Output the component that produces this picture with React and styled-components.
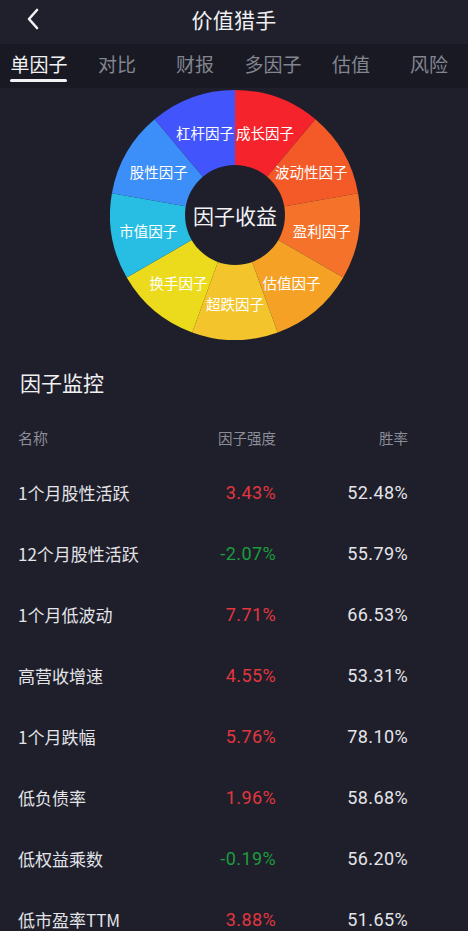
import React from "react";
import styled, { createGlobalStyle } from "styled-components";

const GlobalStyle = createGlobalStyle`
  html, body {
    margin: 0;
    padding: 0;
    background: #1e1f2b;
  }
  body {
    font-family: "Noto Sans CJK SC", "Noto Sans", sans-serif;
    color: #e8e8ec;
  }
`;

const Page = styled.div`
  width: 468px;
  min-height: 931px;
  background: #1e1f2b;
  overflow: hidden;
`;

const NavBar = styled.header`
  height: 44px;
  box-sizing: border-box;
  padding-bottom: 6px;
  display: grid;
  grid-template-columns: 60px 1fr 60px;
  align-items: center;
  background: #1f202c;
`;

const BackButton = styled.div`
  display: flex;
  align-items: center;
  padding-left: 26px;
`;

const Title = styled.h1`
  margin: 0;
  text-align: center;
  font-size: 21px;
  line-height: 28px;
  font-weight: 400;
  color: #f0f0f2;
  letter-spacing: 0.3px;
`;

const TabBar = styled.nav`
  height: 44px;
  display: grid;
  grid-template-columns: repeat(6, 1fr);
  background: #181923;
`;

const Tab = styled.div`
  position: relative;
  display: flex;
  align-items: center;
  justify-content: center;
  padding-bottom: 6px;
  font-size: 19px;
  color: ${(p) => (p.$active ? "#f2f2f4" : "#83858f")};

  &::after {
    content: "";
    display: ${(p) => (p.$active ? "block" : "none")};
    position: absolute;
    left: 10px;
    right: 11px;
    bottom: 6px;
    height: 3px;
    border-radius: 2px;
    background: #f2f2f4;
  }
`;

const ChartWrap = styled.div`
  display: flex;
  justify-content: center;
  padding: 2px 0 0 2px;
  height: 252px;
`;

const SectionTitle = styled.h2`
  margin: 0;
  padding: 26px 20px 0;
  height: 28px;
  line-height: 28px;
  font-size: 21px;
  font-weight: 400;
  color: #f0f0f2;
`;

const Table = styled.div`
  padding: 16px 0 0;
`;

const Row = styled.div`
  display: grid;
  grid-template-columns: 1fr 100px 132px;
  align-items: center;
  height: ${(p) => (p.$head ? "50px" : "61px")};
  padding: 0 60px 0 18px;
`;

const Name = styled.span`
  font-size: ${(p) => (p.$head ? "15px" : "17px")};
  color: ${(p) => (p.$head ? "#8b8d97" : "#e4e4e8")};
`;

const HeadCell = styled.span`
  text-align: right;
  font-size: 14.5px;
  color: #8b8d97;
`;

const Num = styled.span`
  text-align: right;
  font-family: "Roboto", "Noto Sans", sans-serif;
  font-size: 18px;
  letter-spacing: 0.4px;
  color: ${(p) => p.$color || "#e4e4e8"};
`;

const segments = [
  { label: "成长因子", color: "#f5232b" },
  { label: "波动性因子", color: "#f45a27" },
  { label: "盈利因子", color: "#f5722a" },
  { label: "估值因子", color: "#f5a126" },
  { label: "超跌因子", color: "#f4c42d" },
  { label: "换手因子", color: "#ecdb1d" },
  { label: "市值因子", color: "#28bde3" },
  { label: "股性因子", color: "#3c8ff8" },
  { label: "杠杆因子", color: "#4254fb" },
];

const rows = [
  { name: "1个月股性活跃", value: "3.43%", rate: "52.48%" },
  { name: "12个月股性活跃", value: "-2.07%", rate: "55.79%" },
  { name: "1个月低波动", value: "7.71%", rate: "66.53%" },
  { name: "高营收增速", value: "4.55%", rate: "53.31%" },
  { name: "1个月跌幅", value: "5.76%", rate: "78.10%" },
  { name: "低负债率", value: "1.96%", rate: "58.68%" },
  { name: "低权益乘数", value: "-0.19%", rate: "56.20%" },
  { name: "低市盈率TTM", value: "3.88%", rate: "51.65%" },
];

const point = (cx, cy, r, deg) => {
  const a = ((deg - 90) * Math.PI) / 180;
  return [cx + r * Math.cos(a), cy + r * Math.sin(a)];
};

const FactorWheel = () => {
  const cx = 125;
  const cy = 125;
  const R = 125;
  const r = 50;
  const step = 360 / segments.length;

  return (
    <svg width="250" height="250" viewBox="0 0 250 250">
      {segments.map((s, i) => {
        const a0 = i * step;
        const a1 = a0 + step;
        const [x0, y0] = point(cx, cy, R, a0);
        const [x1, y1] = point(cx, cy, R, a1);
        return (
          <path
            key={s.label}
            d={`M${cx},${cy} L${x0},${y0} A${R},${R} 0 0 1 ${x1},${y1} Z`}
            fill={s.color}
          />
        );
      })}
      <circle cx={cx} cy={cy} r={r} fill="#1e1f2b" />
      {segments.map((s, i) => {
        const [x, y] = point(cx, cy, 88, i * step + step / 2);
        return (
          <text
            key={s.label}
            x={x}
            y={y}
            fill="#ffffff"
            fontSize="14.5"
            textAnchor="middle"
            dominantBaseline="central"
            fontFamily='"Noto Sans CJK SC", sans-serif'
          >
            {s.label}
          </text>
        );
      })}
      <text
        x={cx}
        y={cy}
        fill="#f2f2f4"
        fontSize="21"
        textAnchor="middle"
        dominantBaseline="central"
        fontFamily='"Noto Sans CJK SC", sans-serif'
      >
        因子收益
      </text>
    </svg>
  );
};

const tabs = ["单因子", "对比", "财报", "多因子", "估值", "风险"];

export default function App() {
  return (
    <Page>
      <GlobalStyle />
      <NavBar>
        <BackButton>
          <svg width="14" height="22" viewBox="0 0 14 22">
            <path d="M11 2 L3 11 L11 20" fill="none" stroke="#f2f2f4" strokeWidth="2.6" strokeLinecap="round" strokeLinejoin="round" />
          </svg>
        </BackButton>
        <Title>价值猎手</Title>
        <div />
      </NavBar>
      <TabBar>
        {tabs.map((t, i) => (
          <Tab key={t} $active={i === 0}>
            {t}
          </Tab>
        ))}
      </TabBar>
      <ChartWrap>
        <FactorWheel />
      </ChartWrap>
      <SectionTitle>因子监控</SectionTitle>
      <Table>
        <Row $head>
          <Name $head>名称</Name>
          <HeadCell>因子强度</HeadCell>
          <HeadCell>胜率</HeadCell>
        </Row>
        {rows.map((r) => (
          <Row key={r.name}>
            <Name>{r.name}</Name>
            <Num $color={r.value.startsWith("-") ? "#1c9c3c" : "#e2363f"}>{r.value}</Num>
            <Num>{r.rate}</Num>
          </Row>
        ))}
      </Table>
    </Page>
  );
}
